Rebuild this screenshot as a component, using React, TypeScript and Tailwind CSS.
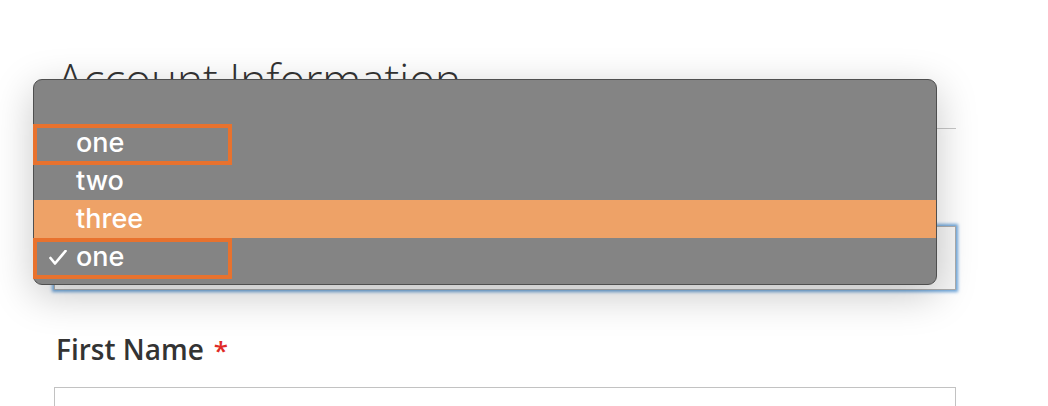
import React from "react";

function Check() {
  return (
    <svg width="18" height="15" viewBox="0 0 18 15" className="block">
      <path d="M1.5 8 L6 13.5 L16.5 1" fill="none" stroke="#ffffff" strokeWidth="2.7" strokeLinecap="round" strokeLinejoin="round" />
    </svg>
  );
}

export default function App() {
  const rows = [
    { label: "one", hl: false, check: false },
    { label: "two", hl: false, check: false },
    { label: "three", hl: true, check: false },
    { label: "one", hl: false, check: true },
  ];
  return (
    <div className="relative w-[1048px] h-[406px] overflow-hidden bg-white font-['Open_Sans',sans-serif]">
      <div className="w-[902px] ml-[54px]">
        <div className="pt-[57px] pb-[27px] pl-[3px] border-b border-[#c8c8c8]">
          <h2 className="text-[44px] leading-[44px] font-light text-[#333333]">Account Information</h2>
        </div>
        <div className="mt-[97px] h-[64px] border border-[#adadad] bg-[#f7f7f7] shadow-[0_0_3px_2px_#6fa7dc]" />
        <div className="mt-[45px] pl-[2px] text-[28px] leading-[28px] font-semibold text-[#333333]">
          First Name<span className="ml-[10px] text-[26px] text-[#e02b27]">*</span>
        </div>
        <div className="mt-[23px] h-[60px] border border-[#c2c2c2] bg-white" />
      </div>

      <div className="absolute left-[33px] top-[79px] w-[904px] h-[206px] rounded-[9px] border border-[#4f4f4f] bg-[#848484] shadow-[0_10px_40px_rgba(0,0,0,0.22)] pt-[44px] overflow-hidden font-['Inter',sans-serif]">
        {rows.map((r, i) => (
          <div
            key={i}
            className={`relative h-[38px] flex items-center ${r.hl ? "bg-[#eea267]" : ""}`}
          >
            <div className="w-[42px] flex justify-end pr-[9px]">
              {r.check ? <Check /> : null}
            </div>
            <span className="text-[27px] leading-[38px] font-medium text-white">{r.label}</span>
          </div>
        ))}
      </div>

      <div className="absolute left-[33px] top-[124px] w-[199px] h-[41px] border-[4px] border-[#e8722e]" />
      <div className="absolute left-[33px] top-[238px] w-[199px] h-[41px] border-[4px] border-[#e8722e]" />
    </div>
  );
}
